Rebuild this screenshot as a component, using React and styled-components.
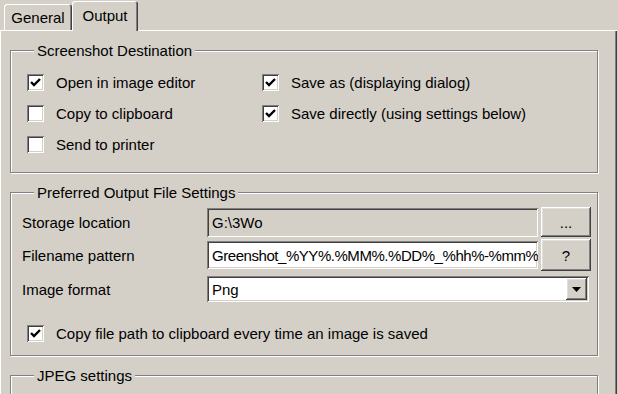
import React from 'react'
import styled, { createGlobalStyle } from 'styled-components'

const GlobalStyle = createGlobalStyle`
  html, body {
    margin: 0;
    padding: 0;
    background: #d4d0c8;
    overflow: hidden;
  }
  body {
    font-family: "Liberation Sans", Arial, sans-serif;
    font-size: 15px;
    color: #000;
  }
`

const Window = styled.div`
  width: 618px;
  height: 394px;
  overflow: hidden;
  background: #d4d0c8;
`

const TabStrip = styled.div`
  display: flex;
  align-items: flex-end;
  height: 30px;
  padding-left: 4px;
`

const Tab = styled.div`
  position: relative;
  box-sizing: border-box;
  display: flex;
  align-items: center;
  justify-content: center;
  width: ${p => (p.$active ? '66px' : '68px')};
  height: ${p => (p.$active ? '30px' : '26px')};
  margin-bottom: ${p => (p.$active ? '-1px' : '0')};
  padding-bottom: ${p => (p.$active ? '2px' : '0')};
  background: #d4d0c8;
  border-top-left-radius: 3px;
  border-top-right-radius: 3px;
  box-shadow: inset 1px 1px 0 #fff, inset -1px 0 0 #404040, inset -2px 0 0 #808080;
  z-index: ${p => (p.$active ? 2 : 1)};
`

const Panel = styled.div`
  box-sizing: border-box;
  width: 617px;
  height: 364px;
  padding: 12px 19px 0 10px;
  box-shadow: inset 1px 1px 0 #fff, inset -1px 0 0 #404040, inset -2px 0 0 #808080;
  display: flex;
  flex-direction: column;
  gap: 11px;
`

const Group = styled.fieldset`
  box-sizing: border-box;
  width: 588px;
  margin: 0;
  padding: ${p => p.$pad || '6px 6px 6px 11px'};
  border: 1px solid #808080;
  box-shadow: 1px 1px 0 #fff, inset 1px 1px 0 #fff;
  min-height: ${p => p.$minHeight || 'auto'};
  flex-shrink: 0;
`

const Legend = styled.legend`
  margin-left: 12px;
  padding: 1px 3px 0;
  background: #d4d0c8;
  line-height: 16px;
`

const CheckGrid = styled.div`
  display: grid;
  grid-template-columns: 235px 1fr;
  grid-auto-rows: 31px;
  padding-left: 5px;
`

const CheckRow = styled.label`
  display: flex;
  align-items: center;
  gap: 12px;
  height: 31px;
  padding-left: ${p => p.$indent || '0'};
  margin-top: ${p => p.$top || '0'};
`

const Box = styled.span`
  box-sizing: border-box;
  width: 17px;
  height: 17px;
  flex: 0 0 17px;
  background: #fff;
  box-shadow: inset 1px 1px 0 #808080, inset -1px -1px 0 #fff,
    inset 2px 2px 0 #404040, inset -2px -2px 0 #d4d0c8;
  display: flex;
  align-items: center;
  justify-content: center;
`

const FieldRow = styled.div`
  display: grid;
  grid-template-columns: 182px 331px 50px;
  column-gap: 3px;
  align-items: center;
  height: ${p => p.$height};
  margin-top: ${p => p.$top || '0'};
`

const FieldLabel = styled.span`
  white-space: nowrap;
`

const TextField = styled.div`
  box-sizing: border-box;
  height: ${p => p.$height || '28px'};
  padding: 0 5px;
  display: flex;
  align-items: center;
  overflow: hidden;
  white-space: nowrap;
  letter-spacing: ${p => (p.$tight ? '-0.45px' : '0')};
  background: ${p => (p.$readOnly ? '#d4d0c8' : '#fff')};
  box-shadow: inset 1px 1px 0 #808080, inset -1px -1px 0 #fff,
    inset 2px 2px 0 #404040, inset -2px -2px 0 #d4d0c8;
`

const Button = styled.div`
  box-sizing: border-box;
  height: ${p => p.$height || '30px'};
  display: flex;
  align-items: center;
  justify-content: center;
  background: #d4d0c8;
  box-shadow: inset -1px -1px 0 #404040, inset 1px 1px 0 #fff,
    inset -2px -2px 0 #808080, inset 2px 2px 0 #dfdfdf;
`

const Combo = styled.div`
  grid-column: 2 / 4;
  box-sizing: border-box;
  width: 382px;
  height: 26px;
  padding: 2px 2px 2px 5px;
  display: flex;
  align-items: center;
  justify-content: space-between;
  background: #fff;
  box-shadow: inset 1px 1px 0 #808080, inset -1px -1px 0 #fff,
    inset 2px 2px 0 #404040, inset -2px -2px 0 #d4d0c8;
`

const ArrowButton = styled(Button)`
  width: 21px;
  height: 22px;
`

const Check = ({ checked }) => (
  <Box>
    {checked && (
      <svg width="11" height="9" viewBox="0 0 11 9">
        <path d="M1 4 L4 7 L10 1" fill="none" stroke="#000" strokeWidth="2.4" />
      </svg>
    )}
  </Box>
)

const Option = ({ checked, children, ...rest }) => (
  <CheckRow {...rest}>
    <Check checked={checked} />
    <span>{children}</span>
  </CheckRow>
)

export default function App() {
  return (
    <Window>
      <GlobalStyle />
      <TabStrip>
        <Tab>General</Tab>
        <Tab $active>Output</Tab>
      </TabStrip>
      <Panel>
        <Group $pad="8px 6px 12px 11px">
          <Legend>Screenshot Destination</Legend>
          <CheckGrid>
            <Option checked>Open in image editor</Option>
            <Option checked>Save as (displaying dialog)</Option>
            <Option>Copy to clipboard</Option>
            <Option checked>Save directly (using settings below)</Option>
            <Option>Send to printer</Option>
          </CheckGrid>
        </Group>

        <Group $pad="6px 6px 6px 11px">
          <Legend>Preferred Output File Settings</Legend>
          <FieldRow $height="30px">
            <FieldLabel>Storage location</FieldLabel>
            <TextField $readOnly $height="29px">G:\3Wo</TextField>
            <Button>...</Button>
          </FieldRow>
          <FieldRow $height="32px" $top="2px">
            <FieldLabel>Filename pattern</FieldLabel>
            <TextField $tight>Greenshot_%YY%.%MM%.%DD%_%hh%-%mm%</TextField>
            <Button $height="32px">?</Button>
          </FieldRow>
          <FieldRow $height="26px" $top="5px">
            <FieldLabel>Image format</FieldLabel>
            <Combo>
              <span>Png</span>
              <ArrowButton>
                <svg width="9" height="5" viewBox="0 0 9 5">
                  <path d="M0 0 H9 L4.5 5 Z" fill="#000" />
                </svg>
              </ArrowButton>
            </Combo>
          </FieldRow>
          <Option checked $indent="5px" $top="16px">
            Copy file path to clipboard every time an image is saved
          </Option>
        </Group>

        <Group $minHeight="80px">
          <Legend>JPEG settings</Legend>
        </Group>
      </Panel>
    </Window>
  )
}
